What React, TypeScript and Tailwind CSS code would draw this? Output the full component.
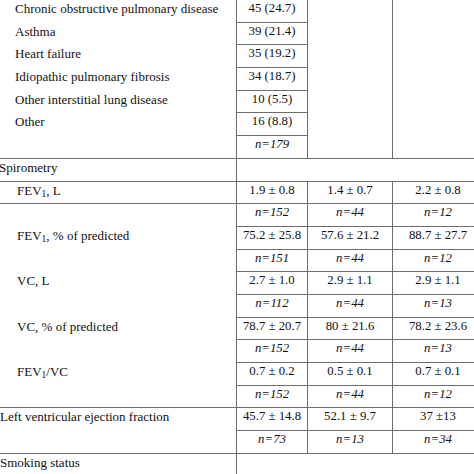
import React from "react";

const B = "border-[#6e6e6e]";

function Sub1() {
  return <sub className="text-[9.5px]">1</sub>;
}

function Lbl({ children, pad = "pl-[15px]" }: { children?: React.ReactNode; pad?: string }) {
  return <div className={`h-[22.7px] pt-[1px] text-[13px] leading-[15px] whitespace-nowrap ${pad}`}>{children}</div>;
}

function V({ children, cls }: { children?: React.ReactNode; cls: string }) {
  return (
    <div className={`pt-[1px] text-[12.8px] leading-[15px] text-center whitespace-nowrap ${B} ${cls}`}>{children}</div>
  );
}

function N({ t }: { t: string }) {
  return <i>n={t}</i>;
}

export default function App() {
  return (
    <div className="w-[474px] h-[474px] overflow-hidden bg-white text-[#111111]" style={{ fontFamily: '"Liberation Serif", "Times New Roman", serif' }}>
      <div className="grid grid-cols-[237px_71px_85px_90px] grid-rows-[repeat(21,22.7px)]">
        {/* Column 1 blocks */}
        <div className={`col-start-1 row-start-1 row-span-7 border-r border-b ${B}`}>
          <Lbl>Chronic obstructive pulmonary disease</Lbl>
          <Lbl>Asthma</Lbl>
          <Lbl>Heart failure</Lbl>
          <Lbl>Idiopathic pulmonary fibrosis</Lbl>
          <Lbl>Other interstitial lung disease</Lbl>
          <Lbl>Other</Lbl>
        </div>
        <div className={`col-start-1 row-start-8 border-r border-b ${B}`}>
          <Lbl pad="pl-0 -ml-[1px]">Spirometry</Lbl>
        </div>
        <div className={`col-start-1 row-start-9 border-r border-b ${B}`}>
          <Lbl pad="pl-[17px]">
            FEV<Sub1 />, L
          </Lbl>
        </div>
        <div className={`col-start-1 row-start-10 row-span-9 border-r border-b ${B}`}>
          <Lbl />
          <Lbl pad="pl-[17px]">
            FEV<Sub1 />, % of predicted
          </Lbl>
          <Lbl />
          <Lbl pad="pl-[17px]">VC, L</Lbl>
          <Lbl />
          <Lbl pad="pl-[17px]">VC, % of predicted</Lbl>
          <Lbl />
          <Lbl pad="pl-[17px]">
            FEV<Sub1 />/VC
          </Lbl>
        </div>
        <div className={`col-start-1 row-start-19 row-span-2 border-r border-b ${B}`}>
          <Lbl pad="pl-0">Left ventricular ejection fraction</Lbl>
        </div>
        <div className={`col-start-1 row-start-21 border-r ${B}`}>
          <Lbl pad="pl-0">Smoking status</Lbl>
        </div>

        {/* Diagnosis values */}
        <V cls="col-start-2 row-start-1 border-r border-b">45 (24.7)</V>
        <V cls="col-start-2 row-start-2 border-r border-b">39 (21.4)</V>
        <V cls="col-start-2 row-start-3 border-r border-b">35 (19.2)</V>
        <V cls="col-start-2 row-start-4 border-r border-b">34 (18.7)</V>
        <V cls="col-start-2 row-start-5 border-r border-b">10 (5.5)</V>
        <V cls="col-start-2 row-start-6 border-r border-b">16 (8.8)</V>
        <V cls="col-start-2 row-start-7 border-r border-b">
          <N t="179" />
        </V>
        <V cls="col-start-3 row-start-1 row-span-6 border-r">{""}</V>
        <V cls="col-start-4 row-start-1 row-span-6">{""}</V>
        <V cls="col-start-3 row-start-7 border-r border-b">{""}</V>
        <V cls="col-start-4 row-start-7 border-b">{""}</V>

        {/* Spirometry header row */}
        <V cls="col-start-2 col-span-3 row-start-8 border-b">{""}</V>

        {/* FEV1 L */}
        <V cls="col-start-2 row-start-9 border-r border-b">1.9 ± 0.8</V>
        <V cls="col-start-3 row-start-9 border-r border-b">1.4 ± 0.7</V>
        <V cls="col-start-4 row-start-9 border-b">2.2 ± 0.8</V>
        <V cls="col-start-2 row-start-10 border-r border-b"><N t="152" /></V>
        <V cls="col-start-3 row-start-10 border-r border-b"><N t="44" /></V>
        <V cls="col-start-4 row-start-10 border-b"><N t="12" /></V>

        {/* FEV1 % */}
        <V cls="col-start-2 row-start-11 border-r border-b">75.2 ± 25.8</V>
        <V cls="col-start-3 row-start-11 border-r border-b">57.6 ± 21.2</V>
        <V cls="col-start-4 row-start-11 border-b">88.7 ± 27.7</V>
        <V cls="col-start-2 row-start-12 border-r border-b"><N t="151" /></V>
        <V cls="col-start-3 row-start-12 border-r border-b"><N t="44" /></V>
        <V cls="col-start-4 row-start-12 border-b"><N t="12" /></V>

        {/* VC L */}
        <V cls="col-start-2 row-start-13 border-r border-b">2.7 ± 1.0</V>
        <V cls="col-start-3 row-start-13 border-r border-b">2.9 ± 1.1</V>
        <V cls="col-start-4 row-start-13 border-b">2.9 ± 1.1</V>
        <V cls="col-start-2 row-start-14 border-r border-b"><N t="112" /></V>
        <V cls="col-start-3 row-start-14 border-r border-b"><N t="44" /></V>
        <V cls="col-start-4 row-start-14 border-b"><N t="13" /></V>

        {/* VC % */}
        <V cls="col-start-2 row-start-15 border-r border-b">78.7 ± 20.7</V>
        <V cls="col-start-3 row-start-15 border-r border-b">80 ± 21.6</V>
        <V cls="col-start-4 row-start-15 border-b">78.2 ± 23.6</V>
        <V cls="col-start-2 row-start-16 border-r border-b"><N t="152" /></V>
        <V cls="col-start-3 row-start-16 border-r border-b"><N t="44" /></V>
        <V cls="col-start-4 row-start-16 border-b"><N t="13" /></V>

        {/* FEV1/VC */}
        <V cls="col-start-2 row-start-17 border-r border-b">0.7 ± 0.2</V>
        <V cls="col-start-3 row-start-17 border-r border-b">0.5 ± 0.1</V>
        <V cls="col-start-4 row-start-17 border-b">0.7 ± 0.1</V>
        <V cls="col-start-2 row-start-18 border-r border-b"><N t="152" /></V>
        <V cls="col-start-3 row-start-18 border-r border-b"><N t="44" /></V>
        <V cls="col-start-4 row-start-18 border-b"><N t="12" /></V>

        {/* LVEF */}
        <V cls="col-start-2 row-start-19 border-r border-b">45.7 ± 14.8</V>
        <V cls="col-start-3 row-start-19 border-r border-b">52.1 ± 9.7</V>
        <V cls="col-start-4 row-start-19 border-b">37 ±13</V>
        <V cls="col-start-2 row-start-20 border-r border-b"><N t="73" /></V>
        <V cls="col-start-3 row-start-20 border-r border-b"><N t="13" /></V>
        <V cls="col-start-4 row-start-20 border-b"><N t="34" /></V>

        {/* Smoking status row */}
        <V cls="col-start-2 col-span-3 row-start-21">{""}</V>
      </div>
    </div>
  );
}
